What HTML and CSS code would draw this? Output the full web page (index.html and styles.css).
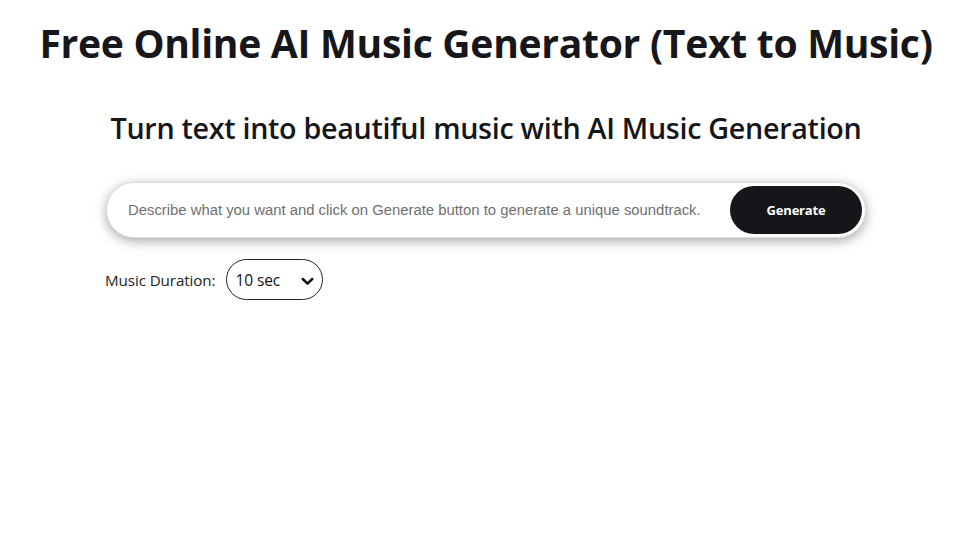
FILE: index.html
```html
<!DOCTYPE html>
<html lang="en">
<head>
<meta charset="utf-8">
<title>Free Online AI Music Generator</title>
<link rel="stylesheet" href="styles.css">
</head>
<body>
<main class="page">
  <h1 class="title">Free Online AI Music Generator (Text to Music)</h1>
  <h2 class="subtitle">Turn text into beautiful music with AI Music Generation</h2>
  <div class="tool">
    <form class="prompt">
      <input class="prompt-input" type="text" placeholder="Describe what you want and click on Generate button to generate a unique soundtrack.">
      <button class="generate" type="button">Generate</button>
    </form>
    <div class="duration">
      <span class="duration-label">Music Duration:</span>
      <div class="select">
        <span class="select-value">10 sec</span>
        <svg class="chevron" width="13" height="9" viewBox="0 0 13 9"><path d="M1.8 2 L6.5 6.7 L11.2 2" fill="none" stroke="#111" stroke-width="2.5" stroke-linecap="round" stroke-linejoin="round"/></svg>
      </div>
    </div>
  </div>
</main>
</body>
</html>
```
FILE: styles.css
```css
* { box-sizing: border-box; }
html, body { margin: 0; padding: 0; background: #fff; }
body {
  font-family: "Open Sans", "Noto Sans", sans-serif;
  color: #16161b;
}
.page {
  padding: 0 6px 0 0;
  display: flex;
  flex-direction: column;
  align-items: center;
}
.title {
  margin: 17px 0 0;
  font-size: 39.1px;
  line-height: 52px;
  font-weight: 700;
  letter-spacing: -0.3px;
  text-align: center;
}
.subtitle {
  margin: 40px 0 0;
  font-size: 28.7px;
  line-height: 38px;
  font-weight: 600;
  letter-spacing: -0.3px;
  text-align: center;
}
.tool {
  width: 760px;
  margin-top: 35px;
  display: flex;
  flex-direction: column;
}
.prompt {
  margin: 0;
  height: 56px;
  border: 1px solid #dcdcdc;
  border-radius: 28px;
  background: #fff;
  box-shadow: 0 3px 12px rgba(0,0,0,0.35);
  display: flex;
  align-items: center;
  padding: 0 3px 0 21px;
}
.prompt-input {
  flex: 1;
  border: none;
  outline: none;
  background: transparent;
  font-family: "Liberation Sans", Arial, sans-serif;
  font-size: 14.85px;
  color: #333;
  padding: 0;
}
.prompt-input::placeholder { color: #6f6f6f; }
.generate {
  width: 132px;
  height: 48px;
  border: none;
  border-radius: 24px;
  background: #15151a;
  color: #fff;
  font-family: "Open Sans", sans-serif;
  font-size: 13px;
  font-weight: 700;
  letter-spacing: -0.2px;
  cursor: pointer;
}
.duration {
  margin-top: 21px;
  display: flex;
  align-items: center;
  gap: 11px;
}
.duration-label {
  font-size: 15.2px;
  color: #222;
  letter-spacing: -0.1px;
  margin-left: -1px;
}
.select {
  width: 97px;
  height: 41px;
  border: 1px solid #222;
  border-radius: 21px;
  display: flex;
  align-items: center;
  justify-content: space-between;
  padding: 0 8px 0 8px;
}
.select-value {
  font-size: 15.5px;
  color: #111;
  letter-spacing: -0.1px;
}
.chevron { display: block; margin-top: 3px; }
```
